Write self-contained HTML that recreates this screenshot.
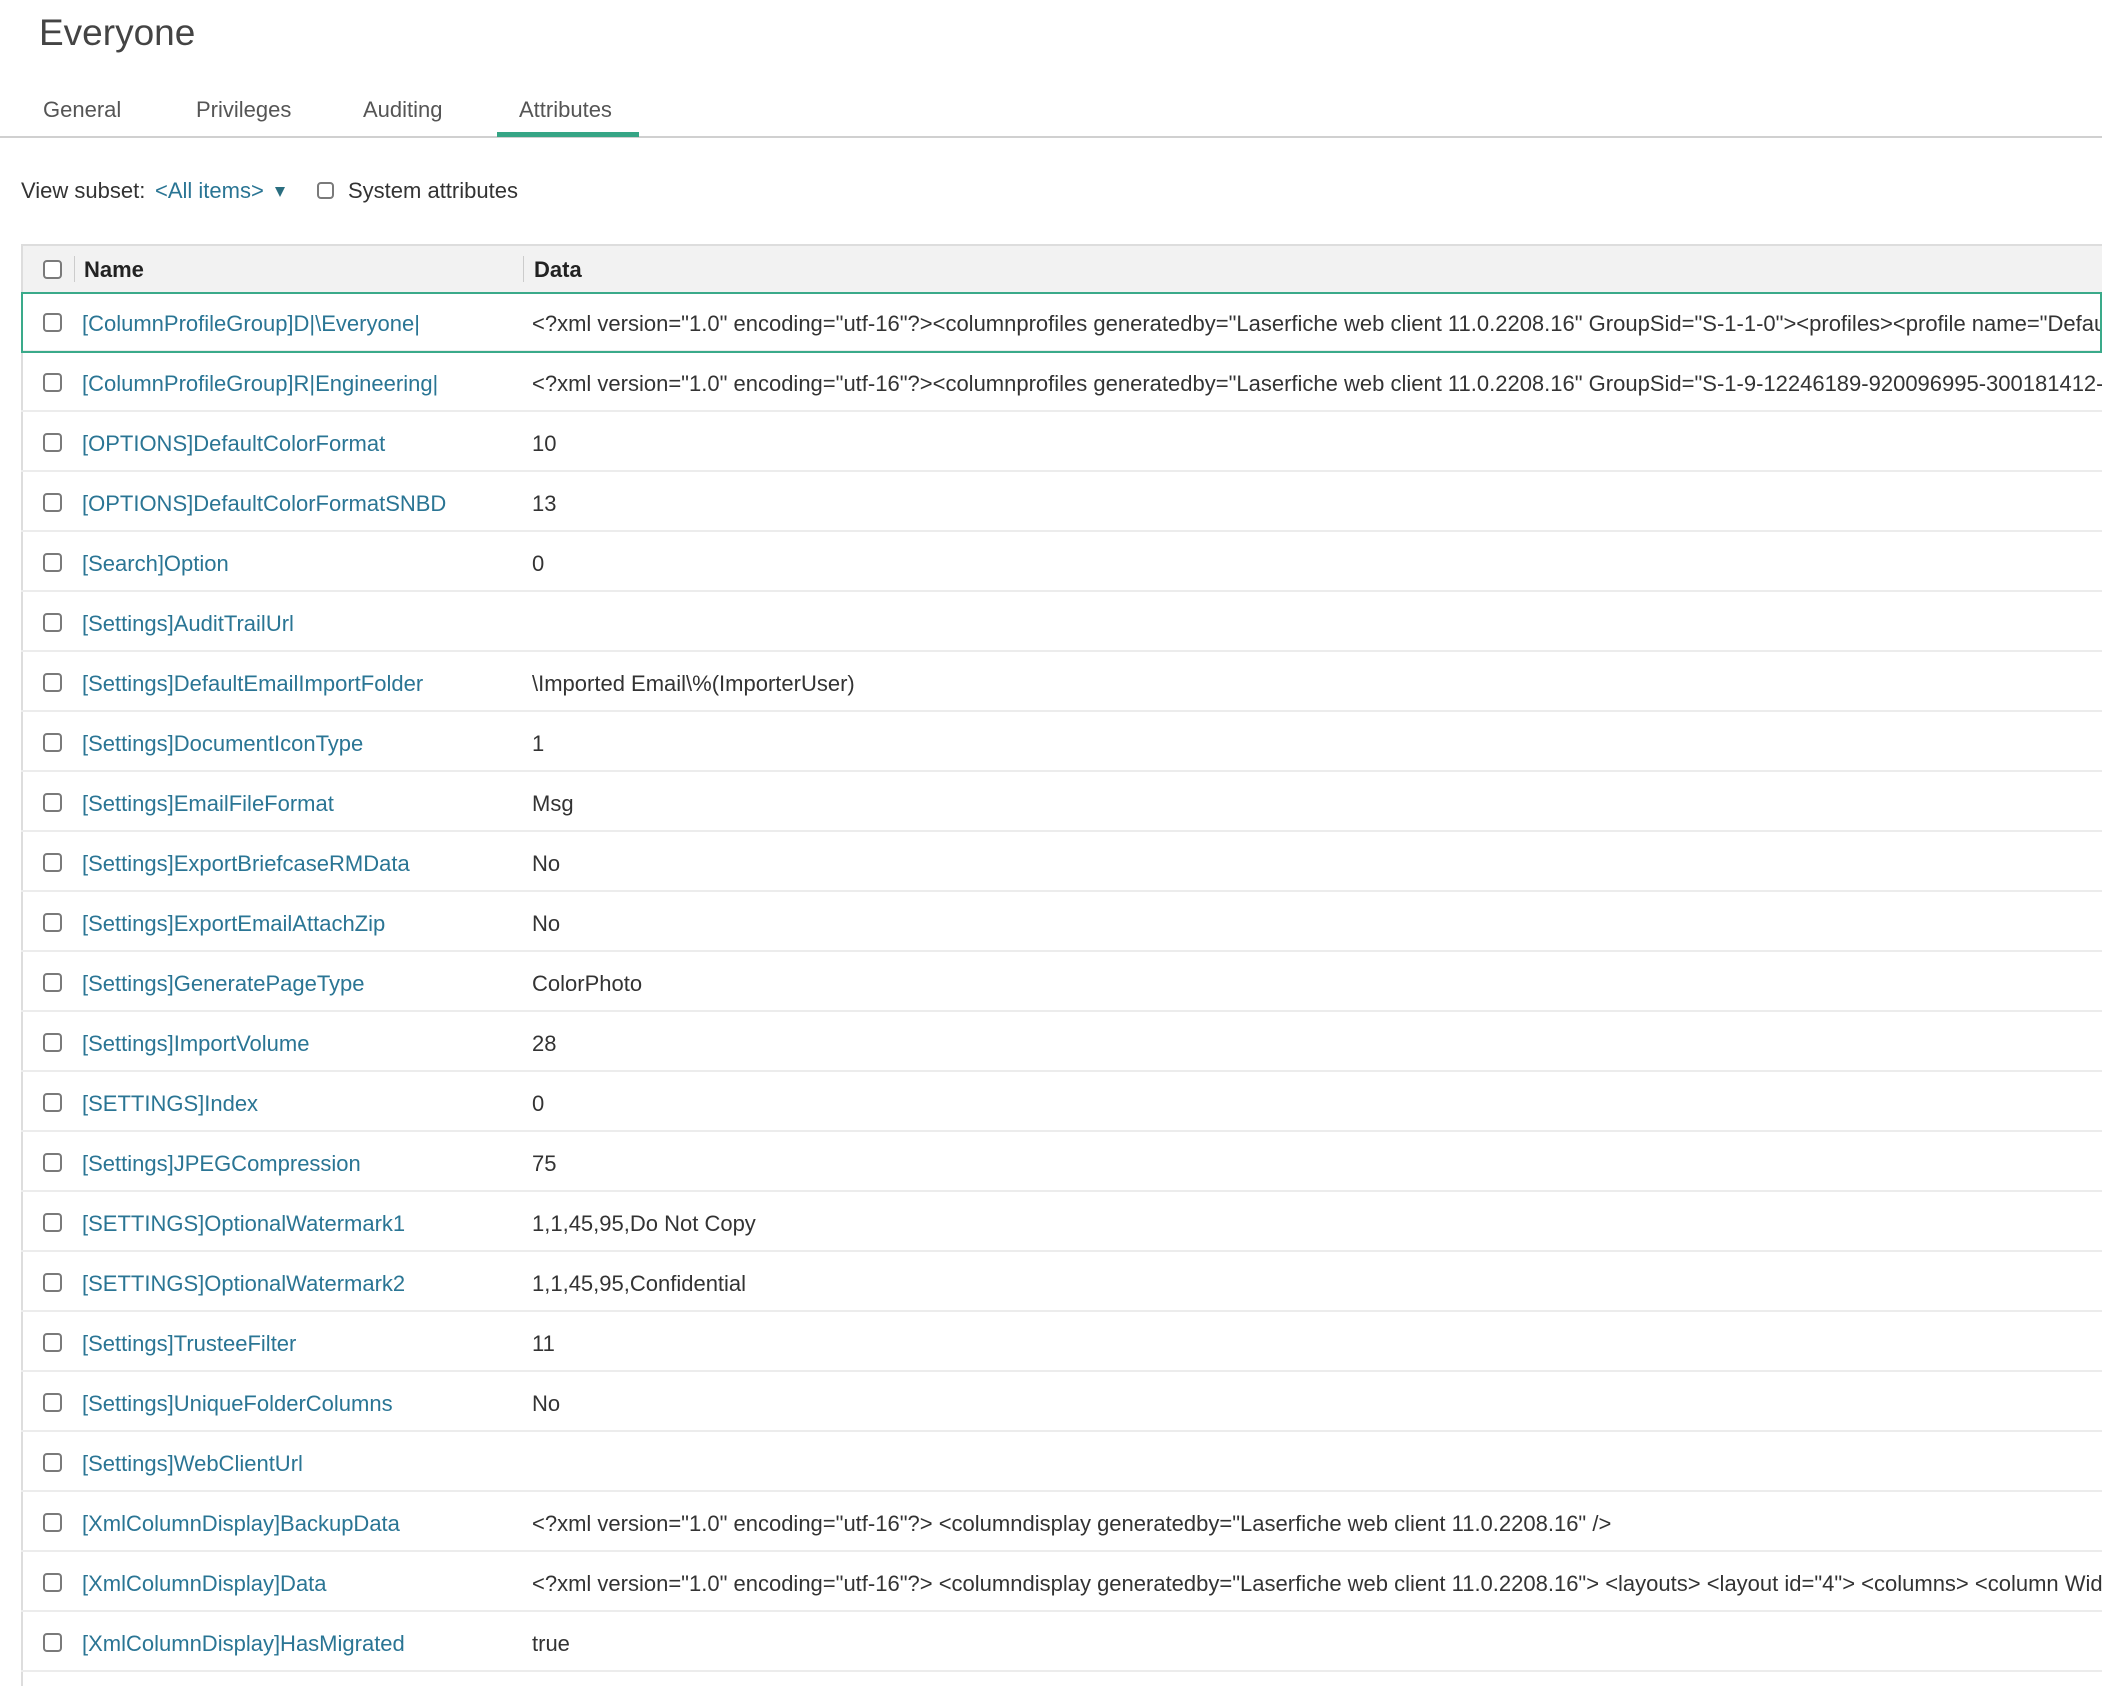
<!DOCTYPE html>
<html><head><meta charset="utf-8"><style>
*{margin:0;padding:0;box-sizing:border-box}
body{width:2102px;height:1686px;overflow:hidden;background:#fff;font-family:"Liberation Sans",sans-serif;color:#333;position:relative}
.a{position:absolute;white-space:nowrap}
.cb{position:absolute;width:19px;height:19px;border:2px solid #7a7a7a;border-radius:4px;background:#fff}
.row{position:absolute;left:21px;right:0;height:60px;border-bottom:2px solid #ececec}
.row .cb{left:22px;top:21px}
.row .n{position:absolute;left:61px;top:2px;line-height:60px;font-size:22px;color:#2a7594;white-space:nowrap}
.row .d{position:absolute;left:511px;top:2px;line-height:60px;font-size:22px;color:#333;white-space:nowrap}
</style></head><body>
<div class="a" style="left:39px;top:9px;font-size:37px;line-height:48px;color:#444">Everyone</div>
<div class="a" style="left:43px;top:96px;font-size:22px;line-height:28px;color:#555">General</div>
<div class="a" style="left:196px;top:96px;font-size:22px;line-height:28px;color:#555">Privileges</div>
<div class="a" style="left:363px;top:96px;font-size:22px;line-height:28px;color:#555">Auditing</div>
<div class="a" style="left:519px;top:96px;font-size:22px;line-height:28px;color:#555">Attributes</div>
<div class="a" style="left:0;right:0;top:136px;height:2px;background:#d0d0d0"></div>
<div class="a" style="left:497px;top:132px;width:142px;height:5px;background:#35a585"></div>
<div class="a" style="left:21px;top:177px;font-size:22px;line-height:28px;color:#333">View subset:</div>
<div class="a" style="left:155px;top:177px;font-size:22px;line-height:28px;color:#2a7594">&lt;All items&gt;</div>
<div class="a" style="left:275px;top:187px;width:0;height:0;border-left:5px solid transparent;border-right:5px solid transparent;border-top:10px solid #2a6e80"></div>
<div class="cb" style="left:317px;top:182px;width:17px;height:17px"></div>
<div class="a" style="left:348px;top:177px;font-size:22px;line-height:28px;color:#333">System attributes</div>
<div class="a" style="left:21px;right:0;top:244px;height:48px;background:#f2f2f2;border-top:2px solid #ddd"></div>
<div class="a" style="left:21px;top:244px;width:2px;height:1442px;background:#ddd"></div>
<div class="cb" style="left:43px;top:260px"></div>
<div class="a" style="left:74px;top:256px;width:1px;height:26px;background:#ccc"></div>
<div class="a" style="left:523px;top:256px;width:1px;height:26px;background:#ccc"></div>
<div class="a" style="left:84px;top:256px;font-size:22px;line-height:28px;font-weight:bold;color:#222">Name</div>
<div class="a" style="left:534px;top:256px;font-size:22px;line-height:28px;font-weight:bold;color:#222">Data</div>
<div class="row" style="top:292px"><div class="cb"></div><div class="n">[ColumnProfileGroup]D|\Everyone|</div><div class="d">&lt;?xml version="1.0" encoding="utf-16"?&gt;&lt;columnprofiles generatedby="Laserfiche web client 11.0.2208.16" GroupSid="S-1-1-0"&gt;&lt;profiles&gt;&lt;profile name="Default"&gt;</div></div>
<div class="row" style="top:352px"><div class="cb"></div><div class="n">[ColumnProfileGroup]R|Engineering|</div><div class="d">&lt;?xml version="1.0" encoding="utf-16"?&gt;&lt;columnprofiles generatedby="Laserfiche web client 11.0.2208.16" GroupSid="S-1-9-12246189-920096995-300181412-3456"&gt;</div></div>
<div class="row" style="top:412px"><div class="cb"></div><div class="n">[OPTIONS]DefaultColorFormat</div><div class="d">10</div></div>
<div class="row" style="top:472px"><div class="cb"></div><div class="n">[OPTIONS]DefaultColorFormatSNBD</div><div class="d">13</div></div>
<div class="row" style="top:532px"><div class="cb"></div><div class="n">[Search]Option</div><div class="d">0</div></div>
<div class="row" style="top:592px"><div class="cb"></div><div class="n">[Settings]AuditTrailUrl</div><div class="d"></div></div>
<div class="row" style="top:652px"><div class="cb"></div><div class="n">[Settings]DefaultEmailImportFolder</div><div class="d">\Imported Email\%(ImporterUser)</div></div>
<div class="row" style="top:712px"><div class="cb"></div><div class="n">[Settings]DocumentIconType</div><div class="d">1</div></div>
<div class="row" style="top:772px"><div class="cb"></div><div class="n">[Settings]EmailFileFormat</div><div class="d">Msg</div></div>
<div class="row" style="top:832px"><div class="cb"></div><div class="n">[Settings]ExportBriefcaseRMData</div><div class="d">No</div></div>
<div class="row" style="top:892px"><div class="cb"></div><div class="n">[Settings]ExportEmailAttachZip</div><div class="d">No</div></div>
<div class="row" style="top:952px"><div class="cb"></div><div class="n">[Settings]GeneratePageType</div><div class="d">ColorPhoto</div></div>
<div class="row" style="top:1012px"><div class="cb"></div><div class="n">[Settings]ImportVolume</div><div class="d">28</div></div>
<div class="row" style="top:1072px"><div class="cb"></div><div class="n">[SETTINGS]Index</div><div class="d">0</div></div>
<div class="row" style="top:1132px"><div class="cb"></div><div class="n">[Settings]JPEGCompression</div><div class="d">75</div></div>
<div class="row" style="top:1192px"><div class="cb"></div><div class="n">[SETTINGS]OptionalWatermark1</div><div class="d">1,1,45,95,Do Not Copy</div></div>
<div class="row" style="top:1252px"><div class="cb"></div><div class="n">[SETTINGS]OptionalWatermark2</div><div class="d">1,1,45,95,Confidential</div></div>
<div class="row" style="top:1312px"><div class="cb"></div><div class="n">[Settings]TrusteeFilter</div><div class="d">11</div></div>
<div class="row" style="top:1372px"><div class="cb"></div><div class="n">[Settings]UniqueFolderColumns</div><div class="d">No</div></div>
<div class="row" style="top:1432px"><div class="cb"></div><div class="n">[Settings]WebClientUrl</div><div class="d"></div></div>
<div class="row" style="top:1492px"><div class="cb"></div><div class="n">[XmlColumnDisplay]BackupData</div><div class="d">&lt;?xml version="1.0" encoding="utf-16"?&gt; &lt;columndisplay generatedby="Laserfiche web client 11.0.2208.16" /&gt;</div></div>
<div class="row" style="top:1552px"><div class="cb"></div><div class="n">[XmlColumnDisplay]Data</div><div class="d">&lt;?xml version="1.0" encoding="utf-16"?&gt; &lt;columndisplay generatedby="Laserfiche web client 11.0.2208.16"&gt; &lt;layouts&gt; &lt;layout id="4"&gt; &lt;columns&gt; &lt;column Width="100"&gt;</div></div>
<div class="row" style="top:1612px"><div class="cb"></div><div class="n">[XmlColumnDisplay]HasMigrated</div><div class="d">true</div></div>
<div class="a" style="left:21px;right:0;top:292px;height:61px;border:2px solid #3aaa8a"></div>
</body></html>
